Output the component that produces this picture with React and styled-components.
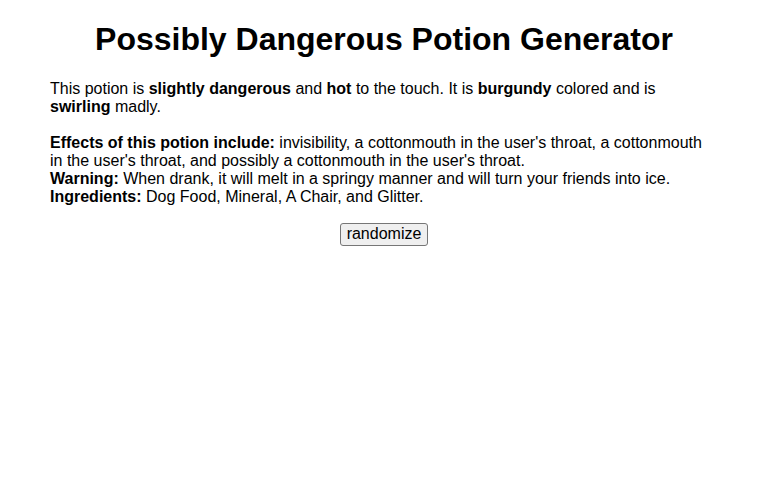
import React, { useState } from "react";
import styled, { createGlobalStyle } from "styled-components";

const GlobalStyle = createGlobalStyle`
  body {
    margin: 8px;
    font-family: "Liberation Sans", Arial, sans-serif;
    color: #000;
    background: #fff;
  }
`;

const Page = styled.div`
  margin: 0 42px;
`;

const Title = styled.h1`
  font-size: 32px;
  font-weight: bold;
  text-align: center;
  margin: 13.44px 0 21.44px;
`;

const Para = styled.p`
  font-size: 16px;
  line-height: normal;
  margin: 16px 0 18px;
`;

const Line = styled.div`
  font-size: 16px;
`;

const Center = styled.div`
  display: flex;
  justify-content: center;
  margin-top: 17px;
`;

const Button = styled.button`
  font-family: "Liberation Sans", Arial, sans-serif;
  font-size: 16px;
  color: #000;
  background: #efefef;
  border: 1px solid #767676;
  border-radius: 3px;
  padding: 1px 6px;
  height: 23px;
  cursor: pointer;

  &:hover {
    background: #e5e5e5;
  }
`;

const potion = {
  danger: "slightly dangerous",
  temp: "hot",
  color: "burgundy",
  motion: "swirling",
  effects:
    "invisibility, a cottonmouth in the user's throat, a cottonmouth in the user's throat, and possibly a cottonmouth in the user's throat.",
  warning: "When drank, it will melt in a springy manner and will turn your friends into ice.",
  ingredients: "Dog Food, Mineral, A Chair, and Glitter.",
};

const App = () => {
  const [p] = useState(potion);

  return (
    <>
      <GlobalStyle />
      <Page>
        <Title>Possibly Dangerous Potion Generator</Title>
        <Para>
          This potion is <b>{p.danger}</b> and <b>{p.temp}</b> to the touch. It
          is <b>{p.color}</b> colored and is <b>{p.motion}</b> madly.
        </Para>
        <div>
          <Line>
            <b>Effects of this potion include:</b> {p.effects}
          </Line>
          <Line>
            <b>Warning:</b> {p.warning}
          </Line>
          <Line>
            <b>Ingredients:</b> {p.ingredients}
          </Line>
        </div>
        <Center>
          <Button>randomize</Button>
        </Center>
      </Page>
    </>
  );
};

export default App;
